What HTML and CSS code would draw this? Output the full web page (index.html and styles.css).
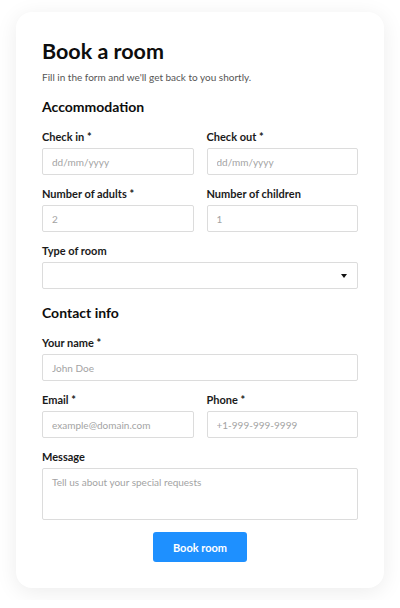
FILE: index.html
```html
<!DOCTYPE html>
<html lang="en">
<head>
  <meta charset="UTF-8" />
  <meta name="viewport" content="width=device-width, initial-scale=1.0"/>
  <title>Book a room</title>
  <link rel="stylesheet" href="styles.css">
</head>
<body>
  <form class="card">
    <h1>Book a room</h1>
    <p class="sub">Fill in the form and we'll get back to you shortly.</p>

    <!-- Accommodation -->
    <h2>Accommodation</h2>
    <div class="row">
      <label class="field">
        <span class="label">Check in *</span>
        <input type="text" placeholder="dd/mm/yyyy">
      </label>
      <label class="field">
        <span class="label">Check out *</span>
        <input type="text" placeholder="dd/mm/yyyy">
      </label>
    </div>
    <div class="row">
      <label class="field">
        <span class="label">Number of adults *</span>
        <input type="text" placeholder="2">
      </label>
      <label class="field">
        <span class="label">Number of children</span>
        <input type="text" placeholder="1">
      </label>
    </div>
    <label class="field">
      <span class="label">Type of room</span>
      <span class="select-wrap">
        <select>
          <option></option>
        </select>
        <span class="caret"></span>
      </span>
    </label>

    <!-- Contact -->
    <h2 class="second">Contact info</h2>
    <label class="field">
      <span class="label">Your name *</span>
      <input type="text" placeholder="John Doe">
    </label>
    <div class="row">
      <label class="field">
        <span class="label">Email *</span>
        <input type="text" placeholder="example@domain.com">
      </label>
      <label class="field">
        <span class="label">Phone *</span>
        <input type="text" placeholder="+1-999-999-9999">
      </label>
    </div>
    <label class="field">
      <span class="label">Message</span>
      <textarea placeholder="Tell us about your special requests"></textarea>
    </label>

    <div class="actions">
      <button type="button">Book room</button>
    </div>
  </form>
</body>
</html>
```

FILE: styles.css
```css
body {
  margin: 0;
  background: #fff;
  font-family: Lato, "Open Sans", sans-serif;
  color: #1a1a1a;
}
.card {
  display: block;
  margin: 12px 16px;
  padding: 25px 26px 26px;
  background: #fff;
  border-radius: 16px;
  box-shadow: 0 4px 22px rgba(0, 0, 0, 0.08);
}
h1 {
  margin: 0;
  font-size: 21.5px;
  line-height: 28px;
  font-weight: 700;
  color: #0d0d0d;
}
.sub {
  margin: 4px 0 0;
  font-size: 10px;
  line-height: 16px;
  color: #555;
}
h2 {
  margin: 12px 0 13px;
  font-size: 14px;
  line-height: 20px;
  font-weight: 700;
  color: #0d0d0d;
}
h2.second {
  margin-top: 14px;
}
.row {
  display: grid;
  grid-template-columns: 1fr 1fr;
  column-gap: 13px;
}
.field {
  display: flex;
  flex-direction: column;
  margin-bottom: 12px;
}
.label {
  font-size: 11px;
  line-height: 14px;
  font-weight: 700;
  color: #1a1a1a;
  margin-bottom: 4px;
}
input, select, textarea {
  box-sizing: border-box;
  width: 100%;
  height: 27px;
  margin: 0;
  padding: 0 9px;
  border: 1px solid #dcdcdc;
  border-radius: 2px;
  background: #fff;
  font-family: inherit;
  font-size: 10px;
  color: #333;
  outline: none;
}
::placeholder {
  color: #a3a3a3;
}
.select-wrap {
  position: relative;
  display: block;
}
select {
  appearance: none;
  -webkit-appearance: none;
}
.caret {
  position: absolute;
  right: 11px;
  top: 12px;
  width: 0;
  height: 0;
  border-left: 3.5px solid transparent;
  border-right: 3.5px solid transparent;
  border-top: 4px solid #111;
}
textarea {
  height: 52px;
  padding: 7px 9px;
  resize: none;
  line-height: 13px;
}
.actions {
  display: flex;
  justify-content: center;
}
button {
  width: 94px;
  height: 30px;
  border: none;
  border-radius: 3px;
  background: #1e90ff;
  color: #fff;
  font-family: inherit;
  font-size: 11px;
  font-weight: 700;
  cursor: pointer;
}
```
